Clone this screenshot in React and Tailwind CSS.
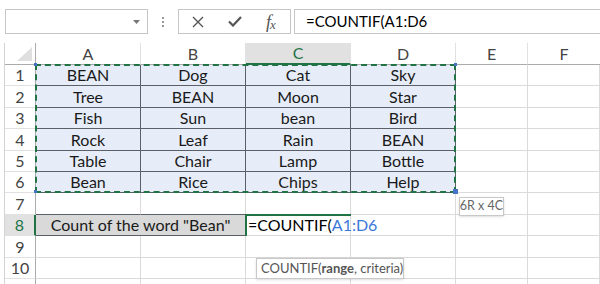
import React from 'react';

const data = [
  ['BEAN', 'Dog', 'Cat', 'Sky'],
  ['Tree', 'BEAN', 'Moon', 'Star'],
  ['Fish', 'Sun', 'bean', 'Bird'],
  ['Rock', 'Leaf', 'Rain', 'BEAN'],
  ['Table', 'Chair', 'Lamp', 'Bottle'],
  ['Bean', 'Rice', 'Chips', 'Help'],
];

const RowHead = ({ n, selected }) => (
  <div
    className={
      selected
        ? 'flex items-center justify-center border-b border-b-[#e1e1e1] border-r-2 border-r-[#217346] bg-[#e1e1e1] text-[#217346] text-[16px]'
        : 'flex items-center justify-center border-b border-b-[#e1e1e1] border-r border-r-[#ababab] text-[#444] text-[16px]'
    }
  >
    {n}
  </div>
);

const Blank = () => <div className="border-r border-b border-[#dadada]" />;

export default function App() {
  return (
    <div className="w-[600px] h-[284px] overflow-hidden bg-white font-['Lato','Open_Sans',sans-serif] text-black">
      {/* Formula bar */}
      <div className="h-[43px] flex items-start pt-[9px] pl-[5px]">
        <div className="w-[143px] h-[25px] border border-[#c6c6c6] flex items-center justify-end pr-[7px]">
          <svg width="7" height="4" viewBox="0 0 7 4">
            <path d="M0 0h7L3.5 4z" fill="#777" />
          </svg>
        </div>
        <div className="w-[30px] h-[25px] flex flex-col items-center justify-center gap-[2px]">
          <span className="w-[2px] h-[2px] bg-[#999]" />
          <span className="w-[2px] h-[2px] bg-[#999]" />
          <span className="w-[2px] h-[2px] bg-[#999]" />
        </div>
        <div className="w-[113px] h-[25px] border border-[#c6c6c6] flex items-center">
          <div className="w-[38px] flex justify-center">
            <svg width="12" height="12" viewBox="0 0 12 12">
              <path d="M1 1l10 10M11 1L1 11" stroke="#555" strokeWidth="1.4" />
            </svg>
          </div>
          <div className="w-[36px] flex justify-center">
            <svg width="14" height="11" viewBox="0 0 14 11">
              <path d="M1 5.5l4 4L13 1" stroke="#555" strokeWidth="2.2" fill="none" />
            </svg>
          </div>
          <div className="w-[36px] flex justify-center items-end font-['Liberation_Serif',serif] italic text-[18px] text-[#555] leading-none">
            f<span className="text-[13px] -ml-[1px]">x</span>
          </div>
        </div>
        <div className="ml-[3px] flex-1 h-[25px] border border-r-0 border-[#c6c6c6] flex items-center pl-[11px] text-[15px]">
          =COUNTIF(A1:D6
        </div>
      </div>

      {/* Sheet */}
      <div className="relative ml-[4px] border-l border-[#d4d4d4]">
        <div className="grid grid-cols-[31px_105px_105px_105px_105px_72px_1fr] grid-rows-[22px_21px_22px_21px_22px_21px_21px_22px_21px_22px_21px_21px] text-[16px]">
          {/* header row */}
          <div className="relative border-r border-r-[#ababab] border-b border-b-[#ababab]">
            <svg className="absolute left-[12px] top-[4px]" width="15" height="14" viewBox="0 0 15 14">
              <path d="M15 0V14H0z" fill="#dfdfdf" />
            </svg>
          </div>
          <div className="flex items-center justify-center border-r border-r-[#e1e1e1] border-b border-b-[#ababab] text-[#444]">A</div>
          <div className="flex items-center justify-center border-r border-r-[#e1e1e1] border-b border-b-[#ababab] text-[#444]">B</div>
          <div className="flex items-center justify-center border-r border-r-[#e1e1e1] border-b-2 border-b-[#217346] bg-[#e1e1e1] text-[#217346]">C</div>
          <div className="flex items-center justify-center border-r border-r-[#e1e1e1] border-b border-b-[#ababab] text-[#444]">D</div>
          <div className="flex items-center justify-center border-r border-r-[#e1e1e1] border-b border-b-[#ababab] text-[#444]">E</div>
          <div className="flex items-center justify-center border-b border-b-[#ababab] text-[#444]">F</div>

          {data.map((row, i) => (
            <React.Fragment key={i}>
              <RowHead n={i + 1} />
              {row.map((v, j) => (
                <div
                  key={j}
                  className="flex items-center justify-center bg-[#e6edf8] border-r border-b border-[#5a5f68] text-[#1a1a1a]"
                >
                  {v}
                </div>
              ))}
              <Blank />
              <Blank />
            </React.Fragment>
          ))}

          {/* row 7 */}
          <RowHead n={7} />
          <div className="border-r border-r-[#dadada] border-b border-b-[#5a5f68]" />
          <div className="border-r border-r-[#dadada] border-b border-b-[#5a5f68]" />
          <Blank />
          <Blank />
          <Blank />
          <Blank />

          {/* row 8 */}
          <RowHead n={8} selected />
          <div className="col-span-2 flex items-center justify-center bg-[#d9d9d9] border-r border-b border-[#5a5f68] text-[#1a1a1a]">
            Count of the word "Bean"
          </div>
          <div className="flex items-center pl-[2px] border-r border-r-[#dadada] border-b border-b-[#dadada] whitespace-nowrap overflow-visible">
            =COUNTIF(<span className="text-[#3c78d8]">A1:D6</span>
            <span className="inline-block w-px h-[17px] bg-black ml-[1px]" />
          </div>
          <div className="border-b border-b-[#dadada] border-r border-r-[#dadada]" />
          <Blank />
          <Blank />

          {[9, 10, 11].map((n) => (
            <React.Fragment key={n}>
              <RowHead n={n} />
              <Blank />
              <Blank />
              <Blank />
              <Blank />
              <Blank />
              <Blank />
            </React.Fragment>
          ))}
        </div>

        {/* copy range marching ants */}
        <div className="absolute left-[30px] top-[21px] w-[421px] h-[129px] border-2 border-dashed border-[#217346] pointer-events-none" />
        <div className="absolute left-[29px] top-[20px] w-[3px] h-[3px] bg-[#4472c4]" />
        <div className="absolute left-[449px] top-[20px] w-[3px] h-[3px] bg-[#4472c4]" />
        <div className="absolute left-[29px] top-[147px] w-[3px] h-[3px] bg-[#4472c4]" />
        <div className="absolute left-[448px] top-[146px] w-[5px] h-[5px] bg-[#4472c4]" />

        {/* active cell */}
        <div className="absolute left-[240px] top-[171px] w-[106px] h-[22px] border-t-2 border-l-2 border-[#217346] pointer-events-none" />

        {/* tooltips */}
        <div className="absolute left-[454px] top-[154px] w-[45px] h-[19px] border border-[#c8c8c8] bg-white shadow-sm flex items-center justify-center text-[12.5px] text-[#666] whitespace-nowrap">
          6R x 4C
        </div>
        <div className="absolute left-[251px] top-[215px] w-[148px] h-[21px] border border-[#c8c8c8] bg-white shadow-sm flex items-center pl-[4px] text-[13px] text-[#555] whitespace-nowrap">
          COUNTIF(<span className="font-bold">range</span>, criteria)
        </div>
      </div>
    </div>
  );
}
